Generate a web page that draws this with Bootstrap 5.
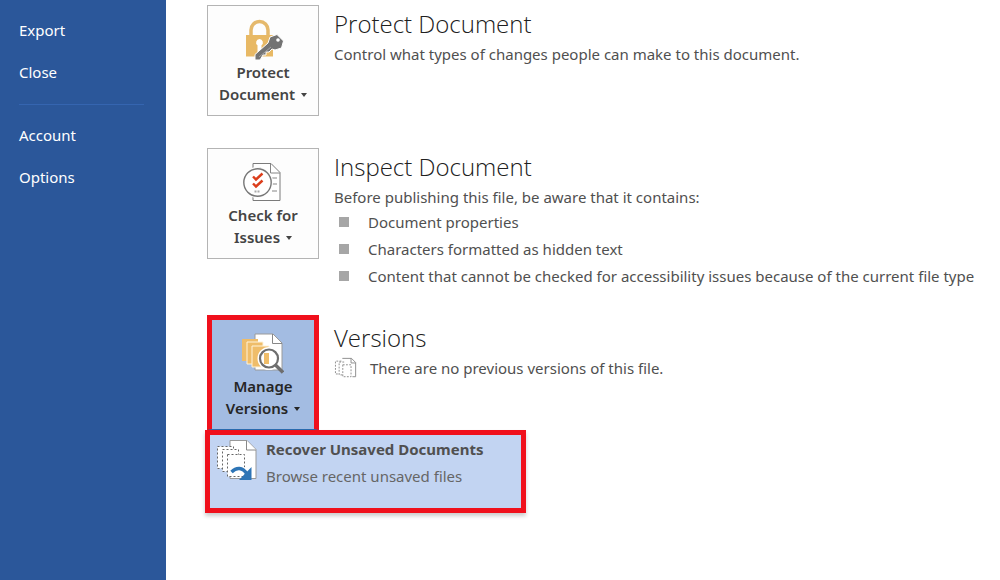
<!DOCTYPE html>
<html lang="en">
<head>
<meta charset="utf-8">
<meta name="viewport" content="width=device-width, initial-scale=1">
<title>Info</title>
<link href="https://cdn.jsdelivr.net/npm/bootstrap@5.3.0/dist/css/bootstrap.min.css" rel="stylesheet">
<style>
  body { font-family: "Noto Sans", "Open Sans", sans-serif; font-size: 15px; line-height: 22px; color: #505050; background: #fff; }
  .backstage-nav { width: 166px; background: #2b579a; padding: 9px 22px 0 19px; }
  .backstage-nav .nav-link { color: #fff; padding: 10px 0; }
  .backstage-nav hr { margin: 11px 0 9px; color: #3565b0; opacity: 1; }
  .info-pane { padding: 5px 0 0 41px; min-width: 0; }
  .info-row { gap: 15px; margin-bottom: 32px; }
  .info-row.inspect { margin-bottom: 26px; }
  .info-row h2 { font-family: "Open Sans", sans-serif; font-size: 24px; line-height: 32px; font-weight: 300; color: #202020; margin: 3px 0 3px; }
  .tile { width: 112px; height: 111px; padding: 2px 0 0; border: 1px solid #b4b4b4; border-radius: 0; background: #fdfdfd; color: #444; font-size: 15px; line-height: 22px; font-weight: 600; }
  .tile:hover { background: #fdfdfd; border-color: #b4b4b4; color: #444; }
  .tile svg { display: block; margin: 0 auto; }
  .tile.dropdown-toggle::after { margin-left: 6px; vertical-align: 3px; border-top-width: 4px; border-left-width: 3px; border-right-width: 3px; }
  .tile.show, .tile.show:hover { height: 115px; border: 5px solid #f0101c; border-bottom: 1px solid #2b6cb0; background: #a3bce2; color: #262626; }
  .findings { list-style: none; padding: 0 0 0 5px; margin: 0; }
  .findings li { display: flex; align-items: center; gap: 19px; height: 27px; }
  .findings li::before { content: ""; flex: none; width: 10px; height: 10px; background: #a6a6a6; }
  .version-menu { top: 100%; left: -2px; width: 321px; border: 5px solid #f0101c; border-radius: 0; padding: 0; background: #c2d4f2; box-shadow: 0 3px 4px rgba(0, 0, 0, .2); font-size: 15px; }
  .version-menu .dropdown-item { height: 73px; padding: 0 0 0 6px; gap: 8px; color: #666; background: #c2d4f2; }
  .version-menu strong { color: #505050; font-weight: 700; line-height: 28px; }
  .version-menu .hint { line-height: 26px; }
</style>
</head>
<body>
<div class="d-flex min-vh-100">
  <nav class="backstage-nav flex-shrink-0" aria-label="File">
    <div class="nav flex-column">
      <a class="nav-link" href="#">Export</a>
      <a class="nav-link" href="#">Close</a>
      <hr>
      <a class="nav-link" href="#">Account</a>
      <a class="nav-link" href="#">Options</a>
    </div>
  </nav>

  <main class="info-pane flex-grow-1">
    <section class="info-row d-flex align-items-start">
      <button type="button" class="btn tile dropdown-toggle flex-shrink-0">
        <svg width="42" height="42" viewBox="0 0 42 42" aria-hidden="true">
          <path d="M9 17V11a8.500 8.500 0 0 1 17 0v6" fill="none" stroke="#e5b96c" stroke-width="3.500"/>
          <path d="M4 16h27v21.500H4z" fill="#e8b965"/>
          <path d="M17.500 20a3.500 3.500 0 0 0-2 6.300V33h4v-6.700a3.500 3.500 0 0 0-2-6.300z" fill="#fff"/>
          <path d="M28 18l7-2.500 6.500 6.500-2 7-6.500 2-3-1-3 3h-3v3h-3l-3 5h-5v-5.500l13-11.500z" fill="#737373" stroke="#fdfdfd"/>
          <circle cx="36" cy="21" r="1.800" fill="#fff"/>
          <path d="M17 38l12-10" stroke="#a5a5a5"/>
        </svg>
        Protect<br>Document</button>
      <div>
        <h2>Protect Document</h2>
        <p class="mb-0">Control what types of changes people can make to this document.</p>
      </div>
    </section>

    <section class="info-row inspect d-flex align-items-start">
      <button type="button" class="btn tile dropdown-toggle flex-shrink-0">
        <svg width="42" height="42" viewBox="0 0 42 42" aria-hidden="true">
          <path d="M11 1.500h18l9 9v28H11z" fill="#fff" stroke="#7b7b7b"/>
          <path d="M28.500 1.500v9.500H38M30 16h5M30 22h5M30 29h5M15 6h4" fill="none" stroke="#858585"/>
          <circle cx="15.500" cy="20.500" r="15.500" fill="#fdfdfd"/>
          <circle cx="15.500" cy="20.500" r="13.700" fill="#fff" stroke="#777" stroke-width="1.400"/>
          <path d="M11 14.500l3 3 6.500-6M11 21.500l3 3 6.500-6" fill="none" stroke="#dc3e1c" stroke-width="2.400"/>
          <path d="M12.500 29.500h6" stroke="#aaa" stroke-width="2" stroke-dasharray="2 1"/>
        </svg>
        Check for<br>Issues</button>
      <div>
        <h2>Inspect Document</h2>
        <p class="mb-0">Before publishing this file, be aware that it contains:</p>
        <ul class="findings">
          <li>Document properties</li>
          <li>Characters formatted as hidden text</li>
          <li>Content that cannot be checked for accessibility issues because of the current file type</li>
        </ul>
      </div>
    </section>

    <section class="info-row d-flex align-items-start">
      <div class="dropdown flex-shrink-0">
        <button type="button" class="btn tile dropdown-toggle show" aria-expanded="true" data-bs-toggle="dropdown">
          <svg width="42" height="42" viewBox="0 0 42 42" aria-hidden="true">
            <path d="M13 1h18l9 9v27H13z" fill="#fff" stroke="#9a9a9a"/>
            <path d="M30.500 1v9.500H40" fill="none" stroke="#888"/>
            <path d="M0 6h16v22H0z" fill="#efbd6a"/>
            <path d="M5 9h16v22H5z" fill="#efbd6a" stroke="#fff3d9"/>
            <path d="M10 13h17v21H10z" fill="#efbd6a" stroke="#fff3d9"/>
            <circle cx="27" cy="25.500" r="9" fill="#fff" stroke="#fff" stroke-width="5"/>
            <path d="M22 20h5v11h-5z" fill="#efbd6a"/>
            <circle cx="27" cy="25.500" r="9" fill="none" stroke="#6e6e6e" stroke-width="2.200"/>
            <path d="M33.500 32l7.500 7.500" stroke="#6e6e6e" stroke-width="3.400"/>
          </svg>
          Manage<br>Versions</button>
        <div class="dropdown-menu version-menu show">
          <a class="dropdown-item d-flex align-items-start" href="#">
            <svg class="mt-1 flex-shrink-0" width="42" height="42" viewBox="0 0 42 42" aria-hidden="true">
              <path d="M14 1.500h17l9 9v29H14z" fill="#fff" stroke="#999"/>
              <path d="M30.500 1.500v9.500H40" fill="#fff" stroke="#888"/>
              <g fill="#fff" stroke="#666" stroke-dasharray="2 2">
                <path d="M1.500 7.500h16v22h-16z"/>
                <path d="M6.500 10.500h16v22h-16z"/>
                <path d="M11.500 15.500h17v22h-17z"/>
              </g>
              <path d="M14 35c5-7 12-7 18 0" fill="none" stroke="#fff" stroke-width="6"/>
              <path d="M15.500 33c5-5 11-5 15.500 2" fill="none" stroke="#2e75b6" stroke-width="3.400"/>
              <path d="M35.500 28v13H23z" fill="#2e75b6"/>
            </svg>
            <span class="d-flex flex-column"><strong>Recover Unsaved Documents</strong><span class="hint">Browse recent unsaved files</span></span>
          </a>
        </div>
      </div>
      <div class="pt-1">
        <h2>Versions</h2>
        <p class="d-flex align-items-center mb-0 gap-2">
          <svg class="flex-shrink-0 me-1" width="24" height="22" viewBox="0 0 24 24" fill="none" stroke="#888" aria-hidden="true">
            <path d="M8 1.500h10l4.500 4.500v15.500H19M17.500 1.500V6.500h5"/>
            <path stroke-dasharray="2 1.500" d="M7 4.500H.5v14H4M10 5.500H4.500v14H8M8.500 8.500h9v13h-9z"/>
          </svg>
          There are no previous versions of this file.
        </p>
      </div>
    </section>
  </main>
</div>
<script src="https://cdn.jsdelivr.net/npm/bootstrap@5.3.0/dist/js/bootstrap.bundle.min.js"></script>
</body>
</html>
